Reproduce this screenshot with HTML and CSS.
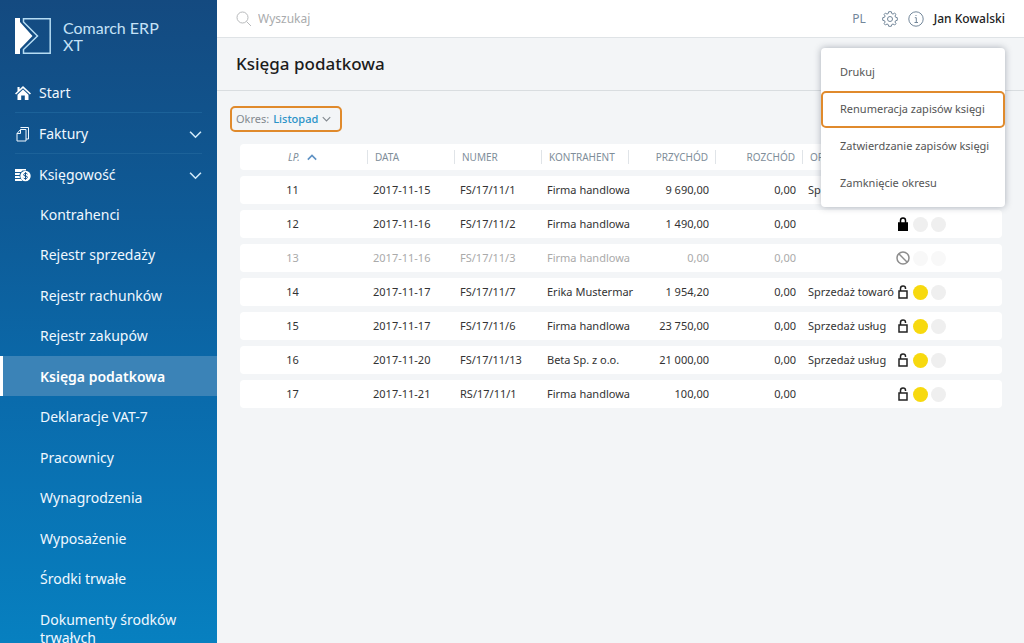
FILE: index.html
```html
<!DOCTYPE html>
<html lang="pl">
<head>
<meta charset="utf-8">
<meta name="viewport" content="width=device-width, initial-scale=1">
<title>Księga podatkowa</title>
<link rel="stylesheet" href="styles.css">
</head>
<body>
<svg class="sprite" aria-hidden="true">
  <symbol id="chevron" viewBox="0 0 12 8"><path d="M1 1.500 6 6.500 11 1.500"/></symbol>
  <symbol id="unlocked" viewBox="0 0 10 14"><path d="M1 6H9V13H1ZM2.500 6V3.500Q2.500 1 5 1T7.500 3.200V4"/></symbol>
</svg>
<div class="app">
  <aside class="sidebar">
    <div class="brand">
      <svg class="logo" viewBox="0 0 36 36" aria-hidden="true">
        <path class="logo-solid" d="M0 0H5V4L17.500 18 5 31V36H0Z"/>
        <path class="logo-line" d="M8.500 .8H35.200V35.200H8.500V31.500L22.500 18 8.500 4Z"/>
      </svg>
      <span class="brand-name">Comarch ERP<br>XT</span>
    </div>
    <nav>
      <ul class="nav">
        <li><a class="nav-link" href="#">
          <svg class="nav-icon fill" viewBox="0 0 16 16" aria-hidden="true"><path d="M8 1 16 8.500 14.900 9.600 8 3.200 1.100 9.600 0 8.500 2.500 6.200V2H4.600V4.200ZM8 4.600 13.500 9.700V15H9.800V10.500H6.200V15H2.500V9.700Z"/></svg>
          Start</a></li>
        <li><a class="nav-link" href="#">
          <svg class="nav-icon line" viewBox="0 0 16 16" aria-hidden="true"><path d="M5.500 3.500H11V15H2V7.500ZM5.500 3.500V7.500H2M5.500 1.500H13.500V13H11"/></svg>
          Faktury<svg class="nav-arrow"><use href="#chevron"/></svg></a></li>
        <li><a class="nav-link" href="#">
          <svg class="nav-icon fill" viewBox="0 0 16 16" aria-hidden="true"><path d="M0 2H11V3.500H7.500L6 5H0ZM0 6H5L4.500 8H0ZM0 9H4.500L5 11H0ZM0 12H6L7.500 14H0Z"/><circle cx="10.500" cy="9" r="5.200"/><path class="coin" d="M12.500 7.200Q12 6.300 10.500 6.300T8.700 7.600 10.500 9 12.400 10.400 10.500 11.700 8.500 10.800M10.500 5.200V12.800"/></svg>
          Księgowość<svg class="nav-arrow"><use href="#chevron"/></svg></a></li>
      </ul>
      <ul class="subnav">
        <li><a href="#">Kontrahenci</a></li>
        <li><a href="#">Rejestr sprzedaży</a></li>
        <li><a href="#">Rejestr rachunków</a></li>
        <li><a href="#">Rejestr zakupów</a></li>
        <li class="active"><a href="#" aria-current="page">Księga podatkowa</a></li>
        <li><a href="#">Deklaracje VAT-7</a></li>
        <li><a href="#">Pracownicy</a></li>
        <li><a href="#">Wynagrodzenia</a></li>
        <li><a href="#">Wyposażenie</a></li>
        <li><a href="#">Środki trwałe</a></li>
        <li><a href="#">Dokumenty środków trwałych</a></li>
      </ul>
    </nav>
  </aside>
  <div class="page">
    <header class="topbar">
      <label class="search">
        <svg viewBox="0 0 16 16" aria-hidden="true"><circle cx="6.500" cy="6.500" r="5.500"/><path d="M10.500 10.500 15 15"/></svg>
        <input type="search" placeholder="Wyszukaj" aria-label="Wyszukaj">
      </label>
      <div class="tools">
        <button class="lang" type="button">PL</button>
        <button class="tool" type="button" aria-label="Ustawienia">
          <svg viewBox="0 0 16 16"><path d="M6.700 .7H9.300L9.800 2.600 11 3.100 12.700 2.100 14 3.400 13 5 13.500 6.200 15.300 6.700V9.300L13.500 9.800 13 11 14 12.700 12.700 14 11 13 9.800 13.500 9.300 15.300H6.700L6.200 13.500 5 13 3.400 14 2.100 12.700 3.100 11 2.600 9.800 .7 9.300V6.700L2.600 6.200 3.100 5 2.100 3.400 3.400 2.100 5 3.100 6.200 2.600Z"/><circle cx="8" cy="8" r="2.500"/></svg>
        </button>
        <button class="tool" type="button" aria-label="Informacje">
          <svg viewBox="0 0 16 16"><circle cx="8" cy="8" r="7.200"/><path d="M6.800 6.700H8.300V11.500M6.500 11.500H10M7.500 4.500H8.500"/></svg>
        </button>
        <button class="user" type="button">Jan Kowalski</button>
      </div>
    </header>
    <div class="title-bar"><h1>Księga podatkowa</h1></div>
    <main class="content">
      <button class="period" type="button"><span>Okres:</span> <span class="period-value">Listopad</span><svg><use href="#chevron"/></svg></button>
      <table class="ledger">
        <colgroup><col class="c-no"><col class="c-std"><col class="c-std"><col class="c-std"><col class="c-std"><col class="c-std"><col class="c-desc"><col></colgroup>
        <thead>
          <tr><th class="no"><span>LP.</span><svg class="sort"><use href="#chevron"/></svg></th><th>DATA</th><th>NUMER</th><th>KONTRAHENT</th><th class="num">PRZYCHÓD</th><th class="num">ROZCHÓD</th><th>OPIS</th><th class="plain"></th></tr>
        </thead>
        <tbody>
          <tr><td class="no">11</td><td>2017-11-15</td><td>FS/17/11/1</td><td>Firma handlowa</td><td class="num">9 690,00</td><td class="num">0,00</td><td>Sp</td><td></td></tr>
          <tr><td class="no">12</td><td>2017-11-16</td><td>FS/17/11/2</td><td>Firma handlowa</td><td class="num">1 490,00</td><td class="num">0,00</td><td></td><td><div class="status"><svg class="lock closed" viewBox="0 0 10 14"><path class="body" d="M.5 6H9.500V13.500H.5Z"/><path d="M2.500 6V3.500Q2.500 1 5 1T7.500 3.500V6"/></svg><i></i><i></i></div></td></tr>
          <tr class="off"><td class="no">13</td><td>2017-11-16</td><td>FS/17/11/3</td><td>Firma handlowa</td><td class="num">0,00</td><td class="num">0,00</td><td></td><td><div class="status"><svg class="ban" viewBox="0 0 14 14"><circle cx="7" cy="7" r="6"/><path d="M2.800 2.800 11.200 11.200"/></svg><i></i><i></i></div></td></tr>
          <tr><td class="no">14</td><td>2017-11-17</td><td>FS/17/11/7</td><td>Erika Mustermar</td><td class="num">1 954,20</td><td class="num">0,00</td><td>Sprzedaż towaró</td><td><div class="status"><svg class="lock"><use href="#unlocked"/></svg><i class="on"></i><i></i></div></td></tr>
          <tr><td class="no">15</td><td>2017-11-17</td><td>FS/17/11/6</td><td>Firma handlowa</td><td class="num">23 750,00</td><td class="num">0,00</td><td>Sprzedaż usług</td><td><div class="status"><svg class="lock"><use href="#unlocked"/></svg><i class="on"></i><i></i></div></td></tr>
          <tr><td class="no">16</td><td>2017-11-20</td><td>FS/17/11/13</td><td>Beta Sp. z o.o.</td><td class="num">21 000,00</td><td class="num">0,00</td><td>Sprzedaż usług</td><td><div class="status"><svg class="lock"><use href="#unlocked"/></svg><i class="on"></i><i></i></div></td></tr>
          <tr><td class="no">17</td><td>2017-11-21</td><td>RS/17/11/1</td><td>Firma handlowa</td><td class="num">100,00</td><td class="num">0,00</td><td></td><td><div class="status"><svg class="lock"><use href="#unlocked"/></svg><i class="on"></i><i></i></div></td></tr>
        </tbody>
      </table>
    </main>
    <div class="menu">
      <button type="button">Drukuj</button>
      <button class="marked" type="button">Renumeracja zapisów księgi</button>
      <button type="button">Zatwierdzanie zapisów księgi</button>
      <button type="button">Zamknięcie okresu</button>
    </div>
  </div>
</div>
</body>
</html>
```
FILE: styles.css
```css
* { box-sizing: border-box; }

body {
  margin: 0;
  font: 11px/16px "Noto Sans", "Open Sans", sans-serif;
  color: #333;
  background: #f3f5f7;
}

button, input {
  font: inherit;
  color: inherit;
  border: 0;
  padding: 0;
  background: none;
}

ul { list-style: none; margin: 0; padding: 0; }
a { color: inherit; text-decoration: none; }
svg { fill: none; stroke: currentColor; flex: none; }
.sprite { display: none; }

.app { display: flex; height: 100vh; overflow: hidden; }

/* Sidebar */
.sidebar {
  flex: 0 0 217px;
  overflow: hidden;
  color: #f0f8ff;
  font-size: 14px;
  line-height: 18px;
  background: linear-gradient(#144a80, #0e5a96 33%, #0a6bac 62%, #0780c0);
}
.brand { display: flex; align-items: center; gap: 12px; padding: 18px 15px; }
.logo { width: 36px; height: 36px; }
.logo-solid { fill: #fff; stroke: none; }
.logo-line { stroke: #b5dcf3; stroke-width: 1.500; }
.brand-name { font: 16px/17px Lato, sans-serif; color: #c5e2f7; }

.nav { padding: 0 15px; }
.nav li + li { border-top: 1px solid #1c6299; }
.nav-link { display: flex; align-items: center; height: 40px; padding-top: 2px; gap: 8px; }
.nav-icon { width: 16px; height: 16px; }
.nav-icon.fill { fill: #fff; stroke: none; }
.nav-icon .coin { fill: none; stroke: #11508b; }
.nav-arrow { width: 13px; height: 9px; margin-left: auto; stroke: #d0eafa; stroke-width: 1.500; }

.subnav a { display: block; padding: 12px 20px 10px 40px; }
.subnav li:nth-child(even) { padding-bottom: 1px; }
.subnav .active { background: #3b83b7; border-left: 3px solid #fff; font-weight: 600; color: #fff; }
.subnav .active a { padding-left: 37px; }

/* Top bar */
.page { flex: 1; min-width: 0; position: relative; }
.topbar {
  display: flex;
  justify-content: space-between;
  align-items: center;
  height: 38px;
  padding: 0 19px;
  background: #fff;
  border-bottom: 1px solid #dfe3e6;
}
.search { display: flex; align-items: center; gap: 6px; color: #b8babc; }
.search svg { width: 16px; height: 16px; }
.search input { width: 200px; font-size: 12px; outline: 0; }
.search input::placeholder { color: #a9abad; opacity: 1; }
.tools { display: flex; align-items: center; gap: 10px; font-size: 12px; color: #73879a; }
.tool { display: flex; }
.lang { margin-right: 6px; }
.tool svg { width: 16px; height: 16px; }
.user { color: #222; font-weight: 500; }

.title-bar { padding: 14px 19px; border-bottom: 1px solid #d9dde0; }
h1 { margin: 0; font-size: 17px; line-height: 24px; font-weight: 500; color: #1c1c1c; }

/* Ledger */
.content { padding: 15px 22px 20px 23px; }
.period {
  display: flex;
  align-items: center;
  gap: 4px;
  height: 26px;
  margin-left: -10px;
  padding: 0 9px 0 4px;
  border: 2px solid #e08a2c;
  border-radius: 5px;
  color: #83898f;
}
.period-value { color: #2b93c8; font-weight: 500; }
.period svg { width: 9px; height: 6px; stroke-width: 1.500; }

.ledger {
  width: 100%;
  margin-top: 6px;
  table-layout: fixed;
  border-collapse: separate;
  border-spacing: 0 6px;
}
.c-no { width: 127px; }
.c-std { width: 87px; }
.c-desc { width: 88px; }
.ledger th, .ledger td {
  height: 28px;
  padding: 0 6px;
  background: #fff;
  text-align: left;
  white-space: nowrap;
}
.ledger th { height: 26px; font-size: 10px; font-weight: 400; color: #808e9a; }
.ledger th:not(.no) {
  padding: 0 7px 0 8px;
  background: linear-gradient(#e0e4e8, #e0e4e8) left center / 1px 14px no-repeat #fff;
}
.ledger th.plain { background: #fff; }
.ledger .num { text-align: right; }
.ledger td.no { padding-right: 28px; text-align: center; }
.ledger th.no { padding-left: 48px; }
.no span { font-style: italic; }
.sort { width: 10px; height: 7px; margin-left: 7px; color: #5f92c4; stroke-width: 2; transform: rotate(180deg); }
.ledger tr > :first-child { border-radius: 4px 0 0 4px; }
.ledger tr > :last-child { border-radius: 0 4px 4px 0; }
.ledger .off td { color: #aaa; }

.status { display: flex; align-items: center; gap: 3px; color: #222; }
.status i { width: 15px; height: 15px; border-radius: 50%; background: #efefef; }
.status i.on { background: #f7d90f; }
.lock { width: 10px; height: 14px; margin: 0 2px; stroke-width: 1.500; }
.lock.closed { color: #000; }
.lock .body { fill: #000; }
.ban { width: 14px; height: 14px; color: #8d8d8d; stroke-width: 1.500; }
.off .status i { background: #f8f8f8; }

/* Drop-down menu */
.menu {
  position: absolute;
  top: 48px;
  right: 19px;
  width: 184px;
  padding: 6px 0 5px;
  border-radius: 4px;
  background: #fff;
  box-shadow: 0 0 7px rgba(30, 40, 60, .35);
}
.menu button {
  display: block;
  width: 100%;
  height: 37px;
  padding: 0 17px 2px;
  border: 2px solid transparent;
  border-radius: 5px;
  text-align: left;
  white-space: nowrap;
  color: #555;
}
.menu .marked { border-color: #e08a2c; }
```
